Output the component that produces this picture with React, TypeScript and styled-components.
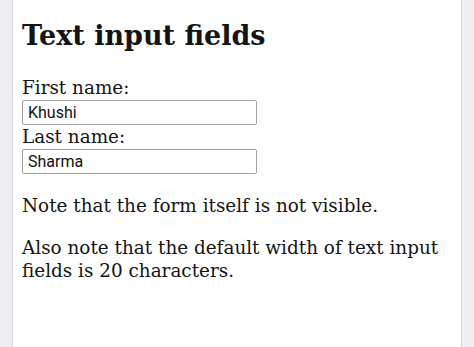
import React from 'react';
import styled, { createGlobalStyle } from 'styled-components';

const GlobalStyle = createGlobalStyle`
  html, body {
    margin: 0;
    padding: 0;
    background: #efeff2;
  }
  body {
    font-family: "DejaVu Serif", "Liberation Serif", serif;
    color: #141414;
  }
`;

const Page = styled.div`
  margin: 0 12px;
  height: 347px;
  background: #fff;
  border-left: 1px solid #d9d9dd;
  border-right: 1px solid #d9d9dd;
  padding: 20px 0 0 9px;
  box-sizing: border-box;
`;

const Heading = styled.h1`
  margin: 0 0 24px;
  font-size: 27px;
  line-height: 32px;
  font-weight: 700;
`;

const Form = styled.form`
  display: flex;
  flex-direction: column;
  align-items: flex-start;
`;

const Label = styled.label`
  display: block;
  font-size: 18.4px;
  line-height: 23px;
  margin-bottom: 1px;
`;

const TextInput = styled.input`
  width: 235px;
  height: 25px;
  box-sizing: border-box;
  margin: 0;
  padding: 0 5px;
  border: 1px solid #a3a3a3;
  border-radius: 2px;
  font-family: Roboto, "Liberation Sans", sans-serif;
  font-size: 16px;
  color: #111;
  background: #fff;
`;

const Paragraph = styled.p<{ $gap: number }>`
  margin: ${(p) => p.$gap}px 0 0;
  font-size: 18.4px;
  line-height: 23px;
`;

const App: React.FC = () => {
  return (
    <>
      <GlobalStyle />
      <Page>
        <Heading>Text input fields</Heading>
        <Form>
          <Label htmlFor="fname">First name:</Label>
          <TextInput type="text" id="fname" name="fname" defaultValue="Khushi" />
          <Label htmlFor="lname">Last name:</Label>
          <TextInput type="text" id="lname" name="lname" defaultValue="Sharma" />
        </Form>
        <Paragraph $gap={20}>Note that the form itself is not visible.</Paragraph>
        <Paragraph $gap={19}>
          Also note that the default width of text input fields is 20 characters.
        </Paragraph>
      </Page>
    </>
  );
};

export default App;
